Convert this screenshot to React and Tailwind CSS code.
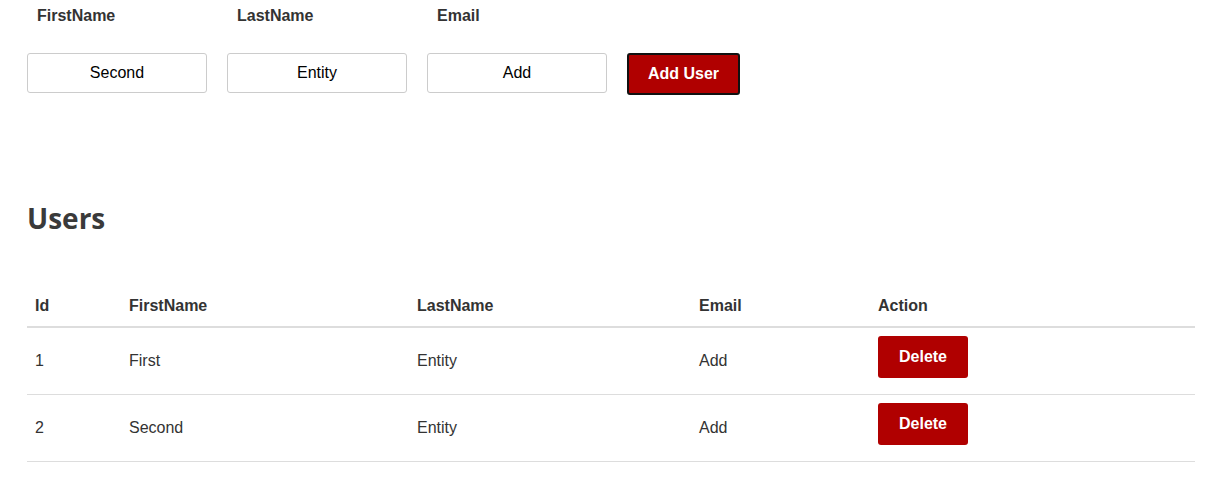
export default function App() {
  const users = [
    { id: 1, first: "First", last: "Entity", email: "Add" },
    { id: 2, first: "Second", last: "Entity", email: "Add" },
  ];
  return (
    <div className="bg-white min-h-screen text-[#333] text-[16px] px-[27px] pt-[7px]" style={{ fontFamily: '"Liberation Sans", Arial, sans-serif' }}>
      <div className="flex items-start gap-[20px]">
        {[
          ["FirstName", "Second"],
          ["LastName", "Entity"],
          ["Email", "Add"],
        ].map(([label, val]) => (
          <div key={label} className="flex flex-col w-[180px]">
            <label className="font-bold px-[10px] leading-[18px] h-[18px]">{label}</label>
            <input
              readOnly
              value={val}
              className="mt-[28px] h-[40px] w-[180px] border border-[#ccc] rounded-[3px] text-center text-black text-[16px] outline-none"
            />
          </div>
        ))}
        <button className="mt-[46px] h-[42px] w-[113px] bg-[#b00000] border-2 border-[#111] rounded-[3px] text-white font-bold text-[16px]">
          Add User
        </button>
      </div>

      <h2 className="mt-[106px] text-[28px] font-bold leading-[34px] text-[#3a3a3a]" style={{ fontFamily: '"Open Sans", "Liberation Sans", sans-serif' }}>
        Users
      </h2>

      <table className="mt-[50px] w-[1168px] border-collapse text-left">
        <thead>
          <tr className="border-b-2 border-[#ddd]">
            <th className="w-[94px] px-[8px] h-[42px] font-bold">Id</th>
            <th className="w-[288px] px-[8px] font-bold">FirstName</th>
            <th className="w-[282px] px-[8px] font-bold">LastName</th>
            <th className="w-[179px] px-[8px] font-bold">Email</th>
            <th className="px-[8px] font-bold">Action</th>
          </tr>
        </thead>
        <tbody>
          {users.map((u) => (
            <tr key={u.id} className="border-b border-[#ddd]">
              <td className="px-[8px] h-[67px]">{u.id}</td>
              <td className="px-[8px]">{u.first}</td>
              <td className="px-[8px]">{u.last}</td>
              <td className="px-[8px]">{u.email}</td>
              <td className="px-[8px]">
                <button className="h-[42px] w-[90px] bg-[#b00000] rounded-[3px] text-white font-bold text-[16px] -translate-y-[4px]">
                  Delete
                </button>
              </td>
            </tr>
          ))}
        </tbody>
      </table>
    </div>
  );
}
